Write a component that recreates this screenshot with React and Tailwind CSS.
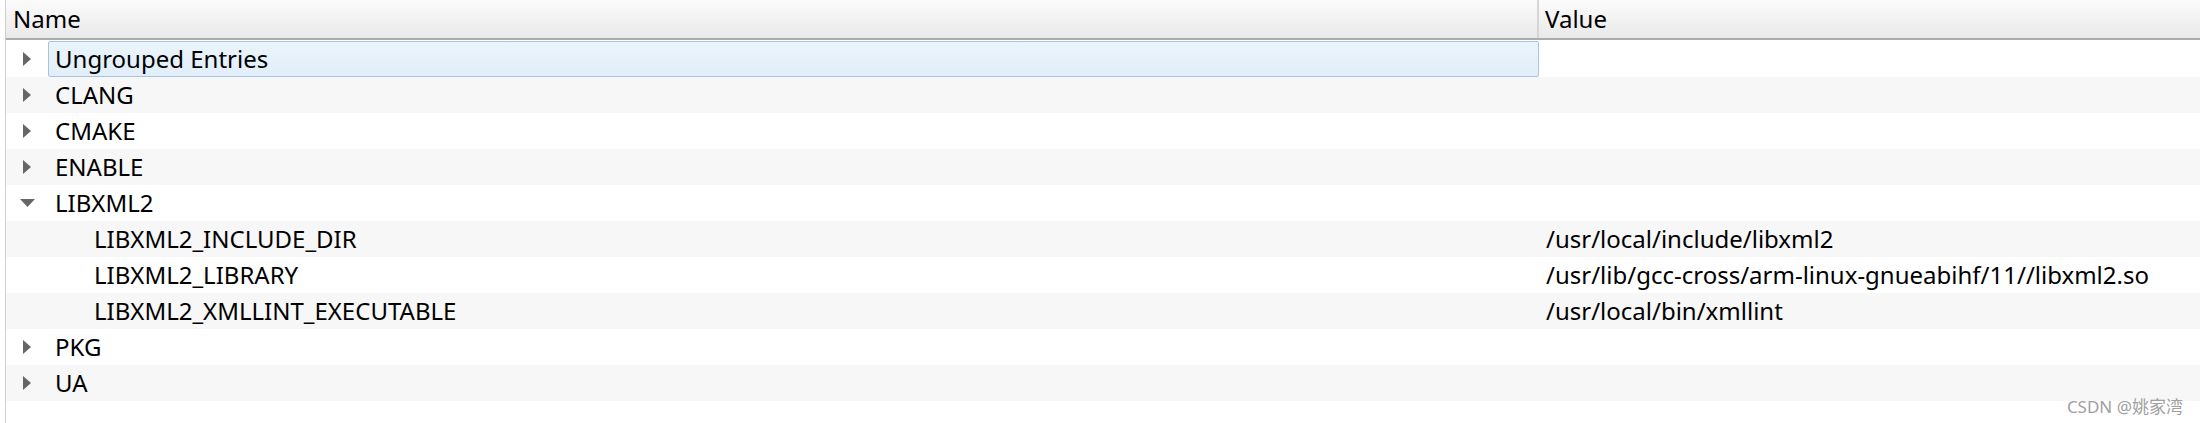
const ROWS = [
  { name: 'Ungrouped Entries', level: 0, arrow: 'right', selected: true },
  { name: 'CLANG', level: 0, arrow: 'right' },
  { name: 'CMAKE', level: 0, arrow: 'right' },
  { name: 'ENABLE', level: 0, arrow: 'right' },
  { name: 'LIBXML2', level: 0, arrow: 'down' },
  { name: 'LIBXML2_INCLUDE_DIR', level: 1, value: '/usr/local/include/libxml2' },
  { name: 'LIBXML2_LIBRARY', level: 1, value: '/usr/lib/gcc-cross/arm-linux-gnueabihf/11//libxml2.so' },
  { name: 'LIBXML2_XMLLINT_EXECUTABLE', level: 1, value: '/usr/local/bin/xmllint' },
  { name: 'PKG', level: 0, arrow: 'right' },
  { name: 'UA', level: 0, arrow: 'right' },
]

function Arrow({ dir }) {
  if (dir === 'down') {
    return (
      <svg width="15" height="8" viewBox="0 0 15 8">
        <polygon points="0,0 15,0 7.5,8" fill="#666666" />
      </svg>
    )
  }
  if (dir === 'right') {
    return (
      <svg width="8" height="14" viewBox="0 0 8 14">
        <polygon points="0,0 8,7 0,14" fill="#666666" />
      </svg>
    )
  }
  return null
}

function Row({ row, index }) {
  const bg = index % 2 === 1 ? 'bg-[#f7f7f7]' : 'bg-white'
  return (
    <div className={`flex h-[36px] ${bg}`}>
      <div className="flex w-[1533px] shrink-0 items-center">
        {row.level === 1 && <div className="w-[39px] shrink-0" />}
        <div className="flex w-[42px] shrink-0 items-center justify-center">
          <Arrow dir={row.arrow} />
        </div>
        {row.selected ? (
          <div className="flex h-[36px] flex-1 items-center rounded-[2px] border border-[#a9c5de] bg-gradient-to-b from-[#eaf4fc] to-[#e1eef9] pl-[6px]">
            {row.name}
          </div>
        ) : (
          <div className="flex flex-1 items-center pl-[7px]">{row.name}</div>
        )}
      </div>
      <div className="flex flex-1 items-center pl-[7px]">{row.value}</div>
    </div>
  )
}

export default function App() {
  return (
    <div className="relative h-[423px] w-[2200px] overflow-hidden bg-white pl-[5px] font-['Noto_Sans',sans-serif] text-[24px] leading-none text-black">
      <div className="h-full border-l border-[#cfcfcf]">
        <div className="flex h-[40px] border-b-2 border-[#ababab] bg-gradient-to-b from-[#fcfcfc] to-[#e9e9e9]">
          <div className="flex w-[1533px] shrink-0 items-center border-r-2 border-[#d6d6d6] pl-[7px]">Name</div>
          <div className="flex flex-1 items-center pl-[6px]">Value</div>
        </div>
        <div className="pt-px">
          {ROWS.map((row, i) => (
            <Row key={row.name} row={row} index={i} />
          ))}
        </div>
      </div>
      <div className="absolute bottom-[8px] right-[17px] font-['Noto_Sans','Noto_Sans_CJK_SC',sans-serif] text-[17px] leading-none text-[#a0a0a0]">
        CSDN @姚家湾
      </div>
    </div>
  )
}
